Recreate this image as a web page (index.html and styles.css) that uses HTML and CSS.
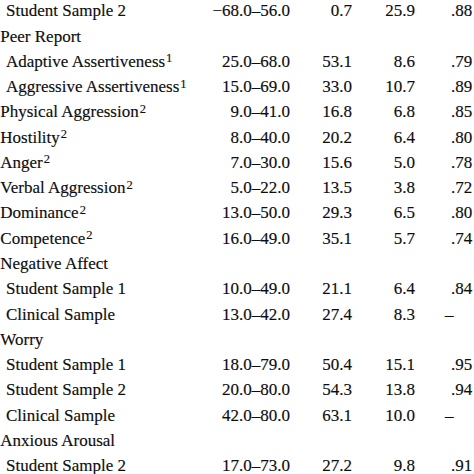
FILE: index.html
```html
<!DOCTYPE html>
<html>
<head>
<meta charset="utf-8">
<link rel="stylesheet" href="styles.css">
</head>
<body>
<div class="table">
  <div class="row"><span class="label sub">Student Sample 2</span><span class="num">−68.0–56.0</span><span class="num">0.7</span><span class="num">25.9</span><span class="alpha">.88</span></div>
  <div class="row"><span class="label">Peer Report</span></div>
  <div class="row"><span class="label sub">Adaptive Assertiveness<sup>1</sup></span><span class="num">25.0–68.0</span><span class="num">53.1</span><span class="num">8.6</span><span class="alpha">.79</span></div>
  <div class="row"><span class="label sub">Aggressive Assertiveness<sup>1</sup></span><span class="num">15.0–69.0</span><span class="num">33.0</span><span class="num">10.7</span><span class="alpha">.89</span></div>
  <div class="row"><span class="label">Physical Aggression<sup>2</sup></span><span class="num">9.0–41.0</span><span class="num">16.8</span><span class="num">6.8</span><span class="alpha">.85</span></div>
  <div class="row"><span class="label">Hostility<sup>2</sup></span><span class="num">8.0–40.0</span><span class="num">20.2</span><span class="num">6.4</span><span class="alpha">.80</span></div>
  <div class="row"><span class="label">Anger<sup>2</sup></span><span class="num">7.0–30.0</span><span class="num">15.6</span><span class="num">5.0</span><span class="alpha">.78</span></div>
  <div class="row"><span class="label">Verbal Aggression<sup>2</sup></span><span class="num">5.0–22.0</span><span class="num">13.5</span><span class="num">3.8</span><span class="alpha">.72</span></div>
  <div class="row"><span class="label">Dominance<sup>2</sup></span><span class="num">13.0–50.0</span><span class="num">29.3</span><span class="num">6.5</span><span class="alpha">.80</span></div>
  <div class="row"><span class="label">Competence<sup>2</sup></span><span class="num">16.0–49.0</span><span class="num">35.1</span><span class="num">5.7</span><span class="alpha">.74</span></div>
  <div class="row"><span class="label">Negative Affect</span></div>
  <div class="row"><span class="label sub">Student Sample 1</span><span class="num">10.0–49.0</span><span class="num">21.1</span><span class="num">6.4</span><span class="alpha">.84</span></div>
  <div class="row"><span class="label sub">Clinical Sample</span><span class="num">13.0–42.0</span><span class="num">27.4</span><span class="num">8.3</span><span class="alpha"><span class="dash">–</span></span></div>
  <div class="row"><span class="label">Worry</span></div>
  <div class="row"><span class="label sub">Student Sample 1</span><span class="num">18.0–79.0</span><span class="num">50.4</span><span class="num">15.1</span><span class="alpha">.95</span></div>
  <div class="row"><span class="label sub">Student Sample 2</span><span class="num">20.0–80.0</span><span class="num">54.3</span><span class="num">13.8</span><span class="alpha">.94</span></div>
  <div class="row"><span class="label sub">Clinical Sample</span><span class="num">42.0–80.0</span><span class="num">63.1</span><span class="num">10.0</span><span class="alpha"><span class="dash">–</span></span></div>
  <div class="row"><span class="label">Anxious Arousal</span></div>
  <div class="row"><span class="label sub">Student Sample 2</span><span class="num">17.0–73.0</span><span class="num">27.2</span><span class="num">9.8</span><span class="alpha">.91</span></div>
</div>
</body>
</html>
```

FILE: styles.css
```css
html, body {
  margin: 0;
  padding: 0;
  background: #ffffff;
  overflow: hidden;
}
body {
  width: 474px;
  height: 474px;
  font-family: "Liberation Serif", "Times New Roman", serif;
  font-size: 17px;
  color: #0d0d0d;
  -webkit-text-stroke: 0.15px #0d0d0d;
}
.table {
  margin-top: -1.7px;
}
.row {
  display: grid;
  grid-template-columns: 195px 95px 62px 63px 59px;
  height: 25.28px;
  line-height: 25.28px;
  white-space: nowrap;
}
.label {
  padding-left: 0.3px;
}
.label.sub {
  padding-left: 6px;
}
.num {
  text-align: right;
}
.alpha {
  padding-left: 36px;
}
.dash {
  margin-left: -6px;
}
sup {
  font-size: 12.5px;
  line-height: 0;
  vertical-align: 4.5px;
  margin-left: 1px;
}
```
